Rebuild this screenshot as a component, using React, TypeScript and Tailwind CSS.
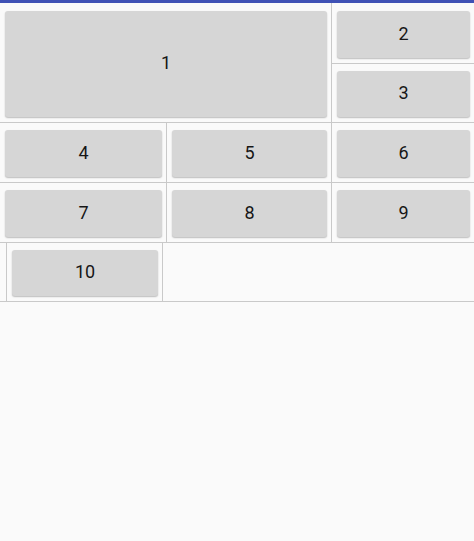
import React from 'react';

const line = 'border-[#c9c9c9]';

function Btn({ label }: { label: string }) {
  return (
    <div className="h-full w-full pl-[5px] pr-[4px] pt-[7px] pb-[5px]">
      <button className="flex h-full w-full items-center justify-center rounded-[3px] bg-[#d6d6d6] pb-[3px] text-[18px] font-normal text-[#161616] shadow-[0_1px_1.5px_rgba(0,0,0,0.25)]">
        {label}
      </button>
    </div>
  );
}

export default function App() {
  return (
    <div className="min-h-screen bg-[#fafafa]" style={{ fontFamily: 'Roboto, "Noto Sans", sans-serif' }}>
      <div className="h-[3px] bg-[#3f51b5]" />

      {/* top block: big cell + two stacked cells */}
      <div className={`flex h-[120px] border-b ${line}`}>
        <div className={`w-[332px] border-r ${line} pt-[1px]`}>
          <Btn label="1" />
        </div>
        <div className="flex flex-1 flex-col">
          <div className={`h-[61px] border-b ${line} pt-[1px]`}>
            <Btn label="2" />
          </div>
          <div className="flex-1">
            <Btn label="3" />
          </div>
        </div>
      </div>

      {[['4', '5', '6'], ['7', '8', '9']].map((row) => (
        <div key={row[0]} className={`flex h-[60px] border-b ${line}`}>
          <div className={`w-[167px] border-r ${line}`}>
            <Btn label={row[0]} />
          </div>
          <div className={`w-[165px] border-r ${line}`}>
            <Btn label={row[1]} />
          </div>
          <div className="flex-1">
            <Btn label={row[2]} />
          </div>
        </div>
      ))}

      <div className={`flex h-[59px] border-b ${line}`}>
        <div className={`w-[7px] border-r ${line}`} />
        <div className={`w-[156px] border-r ${line}`}>
          <Btn label="10" />
        </div>
        <div className="flex-1" />
      </div>
    </div>
  );
}
